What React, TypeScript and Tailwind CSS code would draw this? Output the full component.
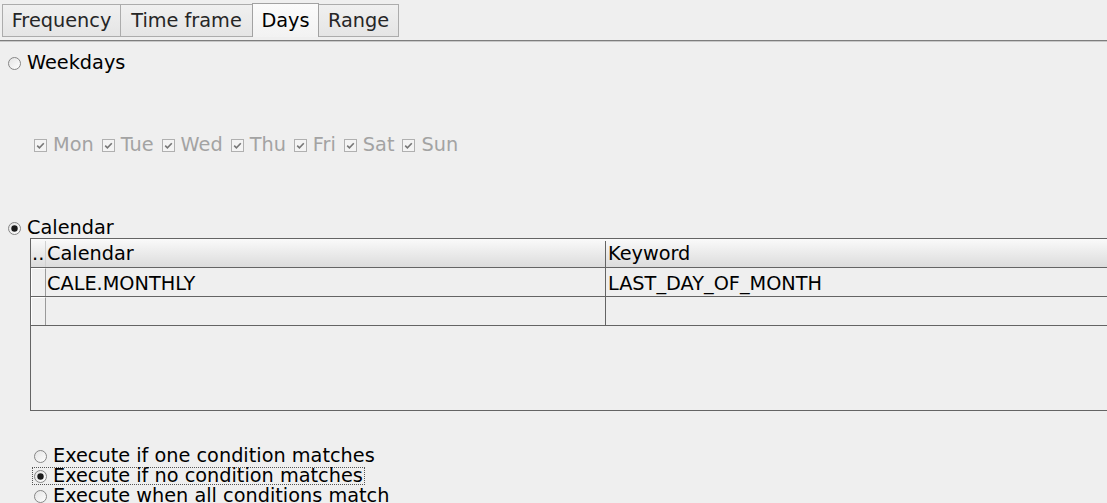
import { ReactNode } from "react";

const font = { fontFamily: '"DejaVu Sans", Verdana, sans-serif' };

const Radio = ({ checked = false }: { checked?: boolean }) => (
  <svg width="13" height="13" viewBox="0 0 13 13" className="shrink-0">
    <defs>
      <linearGradient id="rg" x1="0" y1="0" x2="1" y2="1">
        <stop offset="0" stopColor="#e3e3e3" />
        <stop offset="1" stopColor="#ffffff" />
      </linearGradient>
    </defs>
    <circle cx="6.5" cy="6.5" r="6" fill="url(#rg)" stroke="#858585" />
    {checked && <circle cx="6.5" cy="6.5" r="3.2" fill="#1a1a1a" />}
  </svg>
);

const Check = () => (
  <svg width="13" height="13" viewBox="0 0 13 13" className="shrink-0">
    <rect x="0.5" y="0.5" width="12" height="12" fill="#f4f4f4" stroke="#b0b0b0" />
    <path d="M3.2 6.6 L5.4 8.8 L9.8 4.2" fill="none" stroke="#777777" strokeWidth="1.6" />
  </svg>
);

const Tab = ({ label, w, active = false }: { label: string; w: string; active?: boolean }) => (
  <div
    className={
      active
        ? `${w} h-[34px] flex items-center justify-center border border-b-0 border-[#a2a2a2] bg-gradient-to-b from-[#fbfbfb] to-[#f2f2f2] text-black -mr-px relative z-10`
        : `${w} h-[33px] mt-px flex items-center justify-center border border-[#acacac] bg-gradient-to-b from-[#f0f0f0] to-[#e5e5e5] text-[#262626] -mr-px`
    }
  >
    {label}
  </div>
);

const RowHead = ({ children }: { children?: ReactNode }) => (
  <div className="h-[28px] border-l border-t border-l-white border-t-white border-r border-r-[#9a9a9a] bg-[#f0f0f0] flex items-center overflow-hidden">
    {children}
  </div>
);

const days = ["Mon", "Tue", "Wed", "Thu", "Fri", "Sat", "Sun"];

const App = () => {
  return (
    <div
      className="w-[1107px] h-[503px] overflow-hidden bg-[#efefef] text-[19.3px] leading-[20px] text-black"
      style={font}
    >
      {/* tabs */}
      <div className="h-[40px] pt-[3px] pl-[2px] flex items-start">
        <Tab label="Frequency" w="w-[119px]" />
        <Tab label="Time frame" w="w-[133px]" />
        <Tab label="Days" w="w-[67px]" active />
        <Tab label="Range" w="w-[81px]" />
      </div>
      <div className="h-px bg-[#7d7d7d]" />
      <div className="h-px bg-[#c8c8c8]" />

      <div className="mt-[11px] pl-[8px] flex items-center gap-[6px] h-[20px]">
        <Radio />
        <span>Weekdays</span>
      </div>

      <div className="mt-[62px] pl-[34px] flex items-center h-[20px] text-[#a3a3a3]">
        {days.map((d) => (
          <div key={d} className="flex items-center gap-[6px] mr-[8px]">
            <Check />
            <span>{d}</span>
          </div>
        ))}
      </div>

      <div className="mt-[63px] pl-[8px] flex items-center gap-[6px] h-[20px]">
        <Radio checked />
        <span>Calendar</span>
      </div>

      {/* calendar grid */}
      <div className="ml-[30px] w-[1100px] h-[173px] border border-[#646464] bg-[#efefef]">
        <div className="flex h-[29px] pt-[2px] bg-gradient-to-b from-[#fafafa] to-[#dcdcdc] border-b border-[#646464]">
          <div className="w-[15px] flex items-center pl-[1px] border-r border-[#d0d0d0]">..</div>
          <div className="w-[560px] flex items-center pl-[1px] border-r border-[#646464]">Calendar</div>
          <div className="flex-1 flex items-center pl-[2px]">Keyword</div>
        </div>
        <div className="flex border-b border-[#646464]">
          <div className="w-[15px]">
            <RowHead />
          </div>
          <div className="w-[560px] h-[28px] pt-[3px] flex items-center pl-[1px] border-r border-[#646464]">CALE.MONTHLY</div>
          <div className="flex-1 pt-[3px] flex items-center pl-[2px]">LAST_DAY_OF_MONTH</div>
        </div>
        <div className="flex border-b border-[#646464]">
          <div className="w-[15px]">
            <RowHead />
          </div>
          <div className="w-[560px] h-[28px] border-r border-[#646464]" />
          <div className="flex-1" />
        </div>
      </div>

      <div className="mt-[35px] pl-[32px] flex flex-col">
        <div className="flex items-center gap-[6px] h-[20px] pl-[2px]">
          <Radio />
          <span>Execute if one condition matches</span>
        </div>
        <div className="h-[20px] flex items-center">
          <div className="flex items-center gap-[6px] h-[18px] pl-px pr-px border border-dotted border-[#555]">
            <Radio checked />
            <span>Execute if no condition matches</span>
          </div>
        </div>
        <div className="flex items-center gap-[6px] h-[20px] pl-[2px]">
          <Radio />
          <span>Execute when all conditions match</span>
        </div>
      </div>
    </div>
  );
};

export default App;
